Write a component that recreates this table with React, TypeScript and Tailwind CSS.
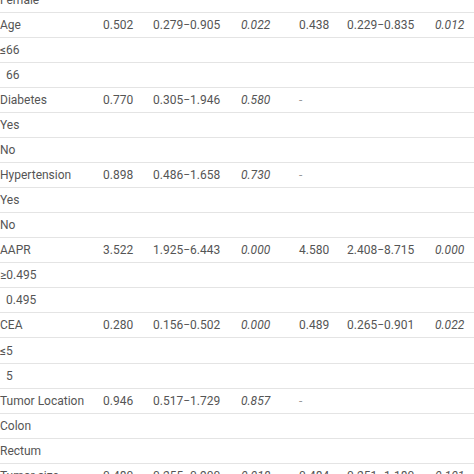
type Row = {
  label: string
  indent?: boolean
  or1?: string
  ci1?: string
  p1?: string
  or2?: string
  ci2?: string
  p2?: string
}

const rows: Row[] = [
  { label: 'Female' },
  { label: 'Age', or1: '0.502', ci1: '0.279−0.905', p1: '0.022', or2: '0.438', ci2: '0.229−0.835', p2: '0.012' },
  { label: '≤66' },
  { label: '66', indent: true },
  { label: 'Diabetes', or1: '0.770', ci1: '0.305−1.946', p1: '0.580', or2: '-' },
  { label: 'Yes' },
  { label: 'No' },
  { label: 'Hypertension', or1: '0.898', ci1: '0.486−1.658', p1: '0.730', or2: '-' },
  { label: 'Yes' },
  { label: 'No' },
  { label: 'AAPR', or1: '3.522', ci1: '1.925−6.443', p1: '0.000', or2: '4.580', ci2: '2.408−8.715', p2: '0.000' },
  { label: '≥0.495' },
  { label: '0.495', indent: true },
  { label: 'CEA', or1: '0.280', ci1: '0.156−0.502', p1: '0.000', or2: '0.489', ci2: '0.265−0.901', p2: '0.022' },
  { label: '≤5' },
  { label: '5', indent: true },
  { label: 'Tumor Location', or1: '0.946', ci1: '0.517−1.729', p1: '0.857', or2: '-' },
  { label: 'Colon' },
  { label: 'Rectum' },
  { label: 'Tumor size', or1: '0.480', ci1: '0.255−0.900', p1: '0.018', or2: '0.484', ci2: '0.251−1.180', p2: '0.101' },
]

function TableRow({ row }: { row: Row }) {
  return (
    <div className="grid h-[25.07px] grid-cols-[103px_50px_88px_58px_48px_88px_1fr] items-center border-b border-[#e4e4e4] whitespace-nowrap">
      <span className={row.indent ? 'pl-[6px]' : ''}>{row.label}</span>
      <span>{row.or1}</span>
      <span>{row.ci1}</span>
      <span className="italic">{row.p1}</span>
      <span className={row.or2 === '-' ? 'text-[#999]' : ''}>{row.or2}</span>
      <span>{row.ci2}</span>
      <span className="italic">{row.p2}</span>
    </div>
  )
}

export default function App() {
  return (
    <div className="h-[474px] w-[474px] overflow-hidden bg-white font-['Roboto','Liberation_Sans',sans-serif] text-[12px] text-[#555]">
      <div className="-mt-[12.4px]">
        {rows.map((row, i) => (
          <TableRow key={i} row={row} />
        ))}
      </div>
    </div>
  )
}
